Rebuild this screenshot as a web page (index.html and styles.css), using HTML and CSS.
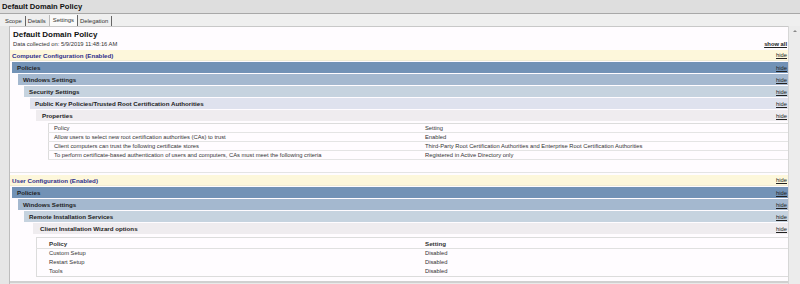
FILE: index.html
```html
<!DOCTYPE html>
<html>
<head>
<meta charset="utf-8">
<link rel="stylesheet" href="styles.css">
</head>
<body>
<div class="titlebar">Default Domain Policy</div>
<div class="tabs">
  <span class="tab">Scope</span><span class="tab">Details</span><span class="tab sel">Settings</span><span class="tab">Delegation</span>
</div>
<div class="main">
  <div class="gutter"></div>
  <div class="frame">
    <div class="report">
      <div class="rtitle">Default Domain Policy</div>
      <div class="collected"><span>Data collected on: 5/9/2019 11:48:16 AM</span><a class="showall">show all</a></div>

      <div class="he0"><span>Computer Configuration (Enabled)</span><a>hide</a></div>
      <div class="he1"><span>Policies</span><a>hide</a></div>
      <div class="he2"><span>Windows Settings</span><a>hide</a></div>
      <div class="he3"><span>Security Settings</span><a>hide</a></div>
      <div class="he4"><span>Public Key Policies/Trusted Root Certification Authorities</span><a>hide</a></div>
      <div class="he5"><span>Properties</span><a>hide</a></div>
      <div class="tblwrap">
        <table class="info">
          <tr><td class="c1">Policy</td><td>Setting</td></tr>
          <tr><td class="c1">Allow users to select new root certification authorities (CAs) to trust</td><td>Enabled</td></tr>
          <tr><td class="c1">Client computers can trust the following certificate stores</td><td>Third-Party Root Certification Authorities and Enterprise Root Certification Authorities</td></tr>
          <tr><td class="c1">To perform certificate-based authentication of users and computers, CAs must meet the following criteria</td><td>Registered in Active Directory only</td></tr>
        </table>
      </div>
      <div class="sectend"></div>

      <div class="he0"><span>User Configuration (Enabled)</span><a>hide</a></div>
      <div class="he1"><span>Policies</span><a>hide</a></div>
      <div class="he2"><span>Windows Settings</span><a>hide</a></div>
      <div class="he3"><span>Remote Installation Services</span><a>hide</a></div>
      <div class="he5 he5b"><span>Client Installation Wizard options</span><a>hide</a></div>
      <div class="tblwrap t2">
        <table class="info info2">
          <tr class="th"><td class="c2">Policy</td><td>Setting</td></tr>
          <tr><td class="c2">Custom Setup</td><td>Disabled</td></tr>
          <tr><td class="c2">Restart Setup</td><td>Disabled</td></tr>
          <tr><td class="c2">Tools</td><td>Disabled</td></tr>
        </table>
      </div>
    </div>
  </div>
  <div class="scroll"><div class="arrow"></div></div>
</div>
</body>
</html>
```
FILE: styles.css
```css
html, body { margin: 0; padding: 0; }
body {
  width: 800px; height: 284px; overflow: hidden;
  background: #e9e9e9;
  font-family: "Liberation Sans", Arial, sans-serif;
  font-size: 5.8px;
  color: #222;
}
.titlebar {
  height: 13px;
  line-height: 13px;
  padding-left: 2px;
  font-weight: bold;
  font-size: 7.6px;
  color: #111;
  background: #dedede;
  border-bottom: 1px solid #a8a8a8;
}
.tabs {
  height: 12px;
  display: flex;
  align-items: flex-end;
  padding-left: 3px;
  background: #efefef;
  font-size: 5.9px;
  color: #333;
}
.tab {
  height: 10px;
  line-height: 10px;
  padding: 0 3px 0 2px;
  border-right: 1px solid #666;
}
.tab.sel {
  background: #fafafa;
  border-left: 1px solid #bbb;
  height: 11px;
  margin-left: -1px;
  padding: 0 3px 0 3px;
}
.main {
  display: flex;
  height: 258px;
}
.gutter {
  width: 9px;
  background: #e6e6e6;
  border-right: 1px solid #bdbdbd;
}
.frame {
  flex: 1;
  background: #fffcff;
  border-top: 1px solid #c8c8c8;
  border-bottom: 2px solid #d0d0d0;
  height: 254px;
  overflow: hidden;
}
.scroll {
  width: 11px;
  background: #ececec;
  border-left: 1px solid #d6d6d6;
}
.arrow {
  width: 0; height: 0;
  margin: 4px auto 0;
  border-left: 2px solid transparent;
  border-right: 2px solid transparent;
  border-bottom: 2px solid #888;
}
.report a {
  text-decoration: underline;
  color: #222;
  font-weight: normal;
}
.rtitle {
  padding: 3px 0 0 3px;
  font-weight: bold;
  font-size: 8px;
  height: 10px;
  color: #111;
}
.collected {
  display: flex;
  justify-content: space-between;
  padding: 0 0 0 3px;
  height: 10px;
  line-height: 9px;
  color: #333;
}
.collected .showall {
  font-weight: bold;
  margin-right: 1px;
}
.he0, .he1, .he2, .he3, .he4, .he5 {
  display: flex;
  justify-content: space-between;
  align-items: center;
  height: 11px;
  font-weight: bold;
  font-size: 6.2px;
  padding-left: 2px;
  padding-right: 1px;
  color: #222;
  margin-bottom: 1px;
}
.he0 a, .he1 a, .he2 a, .he3 a, .he4 a, .he5 a { font-size: 5.8px; }
.he0 { background: #fdf7db; color: #2e2e8a; padding-left: 2px; border-bottom: 1px solid #f1ecd4; height: 10px; }
.he1 { background: #7292b6; margin-left: 2px; padding-left: 5px; }
.he2 { background: #a4b8cf; margin-left: 8px; padding-left: 5px; }
.he3 { background: #c6d3df; margin-left: 14px; padding-left: 5px; }
.he4 { background: #dfe2ee; margin-left: 20px; padding-left: 5px; }
.he5 { background: #efecef; margin-left: 26px; padding-left: 6px; }
.he5b { margin-left: 23px; padding-left: 7px; }
.tblwrap {
  margin-left: 38px;
  padding-top: 1px;
}
.info {
  width: 100%;
  border-collapse: collapse;
  border: 1px solid #dcdcdc;
  border-right: none;
  color: #333;
}
.info td {
  height: 8px;
  padding: 0 0 0 5px;
  border-bottom: 1px solid #e4e4e4;
  line-height: 8px;
  white-space: nowrap;
}
.info td.c1 { width: 366px; }
.info2 td { border-bottom: none; height: 9px; line-height: 9px; }
.info2 .th td { font-weight: bold; font-size: 6.2px; border-bottom: 1px solid #e0e0e0; height: 10px; }
.info2 td.c2 { width: 371px; padding-left: 12px; }
.sectend {
  height: 12px;
  border-bottom: 1px solid #e4e4e4;
  margin-bottom: 2px;
}
.t2 { margin-top: 2px; margin-left: 26px; }
```
